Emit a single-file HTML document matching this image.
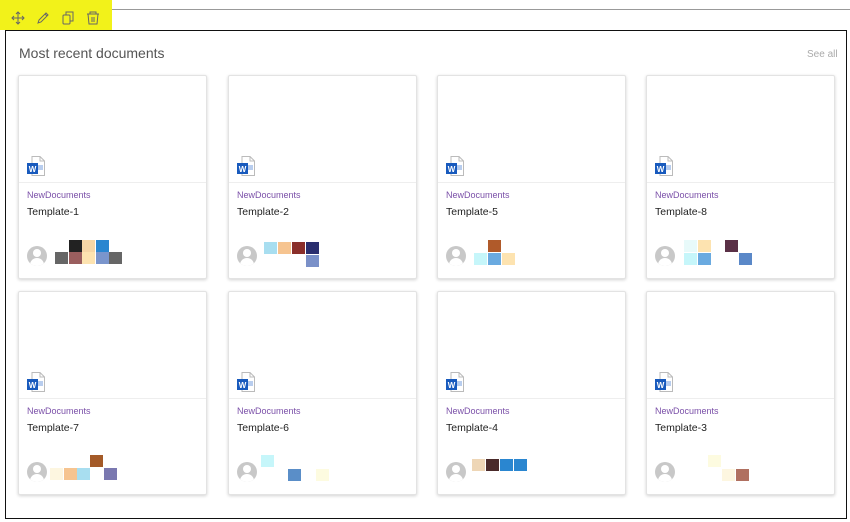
<!DOCTYPE html>
<html><head><style>
body{margin:0;width:850px;height:522px;background:#fff;font-family:"Liberation Sans",sans-serif;position:relative;overflow:hidden}
.line{position:absolute;left:0;top:9px;width:850px;height:1px;background:#999}
.tb{position:absolute;left:0;top:0;width:112px;height:30px;background:#f2f21a}
.box{position:absolute;left:5px;top:30px;width:840px;height:487px;border:1px solid #111}
.title{position:absolute;left:19px;top:45px;font-size:14px;color:#555}
.see{position:absolute;left:807px;top:49px;font-size:10px;color:#aaa}
.card{position:absolute;width:187px;height:202px;border:1px solid #e3e3e3;box-shadow:0 1px 3px rgba(0,0,0,.18);background:#fff;border-radius:2px}
.card .div{position:absolute;left:0;right:0;top:106px;height:1px;background:#eee}
.card .lib{position:absolute;left:8px;top:114px;font-size:9px;color:#7a4fa8}
.card .nm{position:absolute;left:8px;top:130px;font-size:10.5px;color:#222}
.card .av{position:absolute;left:8px;top:170px;width:20px;height:20px;border-radius:50%;background:#c8c8c8;overflow:hidden}
.av:before{content:"";position:absolute;left:6px;top:3px;width:8px;height:8px;border-radius:50%;background:#fff}
.av:after{content:"";position:absolute;left:3px;top:12px;width:14px;height:10px;border-radius:7px 7px 0 0;background:#fff}
.wi{position:absolute;left:8px;top:80px;width:18px;height:20px}
.b{position:absolute;width:13px;height:12px}
</style></head><body>
<div class="line"></div>
<div class="tb">
<svg width="112" height="30" viewBox="0 0 112 30" fill="none" stroke="#666" stroke-width="1">
<path d="M18 12v12M12 18h12M16 14l2-2 2 2M16 22l2 2 2-2M14 16l-2 2 2 2M22 16l2 2-2 2"/>
<path d="M38 23l1-3 7-7 2 2-7 7zM45 14l2 2"/>
<rect x="63" y="15" width="7" height="9" rx="1"/><path d="M66 15v-3h7v9h-3"/>
<path d="M87 14h12M90 14v-2h6v2M88 14l1 10h8l1-10M92 17v5M94 17v5"/>
</svg></div>
<div class="box"></div>
<div class="title">Most recent documents</div>
<div class="see">See all</div>
<div id="cards"></div>
<script>
const t=["Template-1","Template-2","Template-5","Template-8","Template-7","Template-6","Template-4","Template-3"];
const xs=[18,228,437,646],ys=[75,291];
const blocks=[
[[69,240,"#222"],[82,240,"#f6d6a6"],[96,240,"#2a86d0"],[55,252,"#666"],[69,252,"#9a5e5e"],[82,252,"#fde3b0"],[96,252,"#7a95cc"],[109,252,"#666"]],
[[264,242,"#a8def0"],[278,242,"#f6c490"],[292,242,"#8a2e2a"],[306,242,"#2a2e6e"],[306,255,"#7a90c8"]],
[[488,240,"#b05a2a"],[474,253,"#c6f6fa"],[488,253,"#6aaae0"],[502,253,"#fde3b0"]],
[[684,240,"#e8fafa"],[698,240,"#fde3b0"],[725,240,"#5a3046"],[684,253,"#c6f6fa"],[698,253,"#6aaae0"],[739,253,"#5a88c8"]],
[[90,455,"#a45a28"],[50,468,"#fdf6e0"],[64,468,"#f6c490"],[77,468,"#a8def0"],[104,468,"#7a78b0"]],
[[261,455,"#c6f6fa"],[288,469,"#5a8ec8"],[316,469,"#fdfbe0"]],
[[472,459,"#eed6b6"],[486,459,"#4a2a2a"],[500,459,"#2a86d0"],[514,459,"#2a86d0"]],
[[708,455,"#fdfbe0"],[722,469,"#fdf6e0"],[736,469,"#b07060"]]];
let h="";
t.forEach((n,i)=>{const x=xs[i%4],y=ys[i>>2];
h+=`<div class="card" style="left:${x}px;top:${y}px"><svg class="wi" viewBox="0 0 18 20"><path d="M5 .5h8l4.5 4.5v14.5h-12.5z" fill="#fff" stroke="#bbb"/><path d="M13 .5v4.5h4.5" fill="none" stroke="#bbb"/><rect x="11" y="9" width="5" height="5" fill="#b8cdee"/><rect x="0" y="7" width="11" height="11" fill="#185abd"/><text x="5.5" y="16" font-size="8" font-weight="bold" fill="#fff" text-anchor="middle" font-family="Liberation Sans">W</text></svg><div class="div"></div><div class="lib">NewDocuments</div><div class="nm">${n}</div><div class="av"></div></div>`;
blocks[i].forEach(b=>{h+=`<div class="b" style="left:${b[0]}px;top:${b[1]}px;background:${b[2]}"></div>`});});
document.getElementById("cards").innerHTML=h;
</script>
</body></html>
